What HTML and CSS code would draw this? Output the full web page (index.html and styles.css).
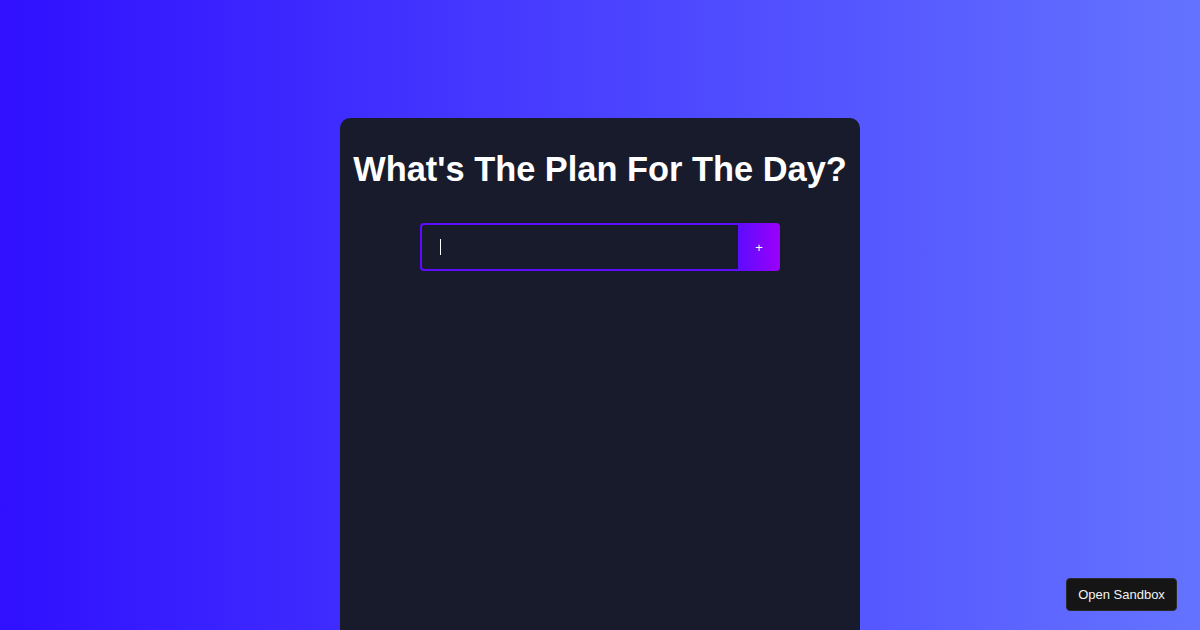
FILE: index.html
```html
<!DOCTYPE html>
<html>
  <head>
  <meta charset="utf-8">
  <title>Todo App</title>
  <link rel="stylesheet" href="styles.css">
  </head>
  <body>

<div class="todo-app">
  <h1>What's The Plan For The Day?</h1>
  <form class="todo-form">
    <div class="input-wrap">
      <input type="text" class="todo-input" name="text">
      <span class="caret"></span>
    </div>
    <button type="button" class="todo-button">+</button>
  </form>
</div>

<a class="sandbox-btn" href="#">Open Sandbox</a>

  </body>
</html>
```

FILE: styles.css
```css
* {box-sizing: border-box;}
html, body {margin: 0; padding: 0; height: 100%; overflow: hidden;}
body {
  font-family: "Liberation Sans", Arial, sans-serif;
  background: linear-gradient(90deg, rgba(48,16,255,1) 0%, rgba(100,115,255,1) 100%);
}
.todo-app {
  width: 520px;
  min-height: 600px;
  margin: 118px auto 0 auto;
  padding-top: 1px;
  background: #181b2b;
  border-radius: 10px;
  text-align: center;
}
h1 {
  margin: 30px 0 34px 0;
  color: #fff;
  font-size: 34.4px;
  font-weight: bold;
  line-height: 40px;
}
.todo-form {display: flex; justify-content: center;}
.input-wrap {position: relative;}
.todo-input {
  display: block;
  width: 318px;
  height: 48px;
  padding: 14px 32px 14px 18px;
  border: 2px solid #5d0cff;
  border-right: none;
  border-radius: 4px 0 0 4px;
  outline: none;
  background: transparent;
  color: #fff;
  font-family: "Liberation Sans", Arial, sans-serif;
  font-size: 16px;
  caret-color: #fff;
}
.caret {
  position: absolute;
  left: 20px;
  top: 16px;
  width: 1px;
  height: 16px;
  background: #fff;
}
.todo-button {
  width: 42px;
  height: 48px;
  padding: 0;
  border: none;
  border-radius: 0 4px 4px 0;
  background: linear-gradient(90deg, rgba(93,12,255,1) 0%, rgba(155,0,250,1) 100%);
  color: #fff;
  font-family: "Liberation Sans", Arial, sans-serif;
  font-size: 13px;
  cursor: pointer;
}
.sandbox-btn {
  position: fixed;
  right: 23px;
  bottom: 19px;
  width: 111px;
  height: 33px;
  line-height: 31px;
  border: 1px solid #2a2a2a;
  border-radius: 4px;
  background: #151515;
  color: #f2f2f2;
  font-size: 13px;
  text-align: center;
  text-decoration: none;
}
```
